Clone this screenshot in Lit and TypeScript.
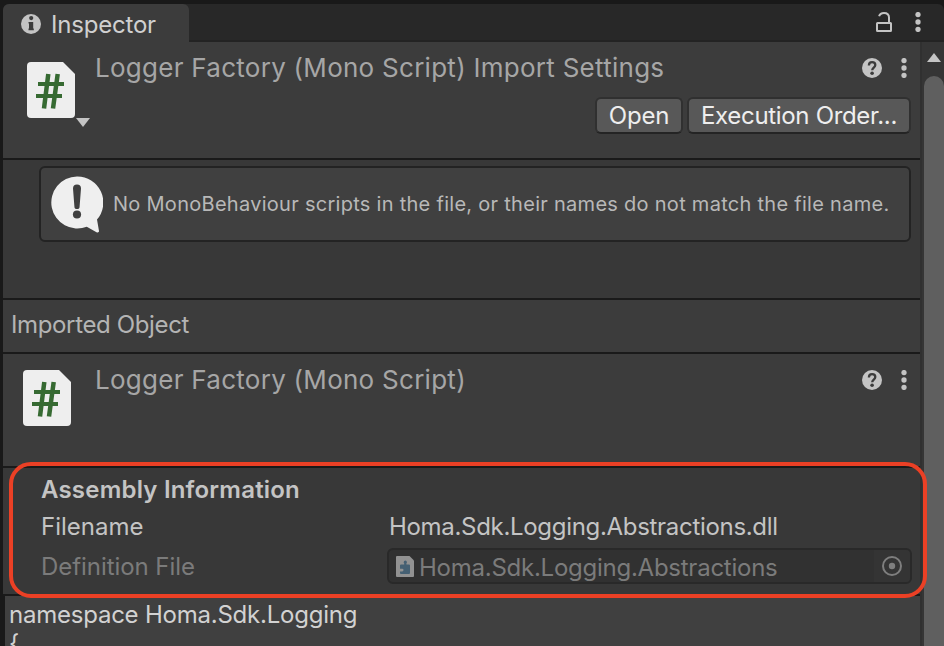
import { LitElement, html, css, svg } from "lit";
import { customElement, property } from "lit/decorators.js";

@customElement("script-icon")
class ScriptIcon extends LitElement {
  static styles = css`
    :host { display: block; width: 48px; height: 56px; }
    svg { display: block; }
  `;
  render() {
    return html`<svg width="48" height="56" viewBox="0 0 48 56">
      <path d="M4 0H36L48 12V52a4 4 0 0 1-4 4H4a4 4 0 0 1-4-4V4a4 4 0 0 1 4-4Z" fill="#eeeeee" />
      <path d="M21.3 12 17 46.5M30.7 12 26 46.5" fill="none" stroke="#366a32" stroke-width="4.5" />
      <path d="M11 22H37M9 34H35" fill="none" stroke="#366a32" stroke-width="4.2" />
    </svg>`;
  }
}

@customElement("kebab-icon")
class KebabIcon extends LitElement {
  static styles = css`
    :host { display: block; width: 6px; height: 20px; }
    svg { display: block; }
  `;
  render() {
    return html`<svg width="6" height="20" viewBox="0 0 6 20" fill="#c4c4c4">
      ${[2.6, 10, 17.4].map((y) => svg`<circle cx="3" cy=${y} r="2.65" />`)}
    </svg>`;
  }
}

@customElement("help-icon")
class HelpIcon extends LitElement {
  static styles = css`
    :host { display: block; width: 20px; height: 20px; }
    svg { display: block; }
  `;
  render() {
    return html`<svg width="20" height="20" viewBox="0 0 20 20">
      <circle cx="10" cy="10" r="10" fill="#c4c4c4" />
      <path d="M6.9 7.4C6.9 5.3 8.2 4.1 10.1 4.1S13.3 5.3 13.3 7c0 2.6-3.1 2.6-3.1 5.3" fill="none" stroke="#3c3c3c" stroke-width="2.3" />
      <circle cx="10.1" cy="15.2" r="1.8" fill="#3c3c3c" />
    </svg>`;
  }
}

@customElement("asset-header")
class AssetHeader extends LitElement {
  @property() heading = "";
  @property({ type: Boolean }) importer = false;

  static styles = css`
    :host { display: block; box-sizing: border-box; height: 112px; background: #3c3c3c; }
    :host([importer]) { height: 116px; }
    .row { display: flex; align-items: flex-start; }
    .icon { width: 92px; flex: none; padding: 16px 0 0 20px; box-sizing: border-box; }
    :host([importer]) .icon { padding: 20px 0 0 24px; }
    .arrow { display: block; margin-left: 48px; }
    .main { flex: 1; padding: 10px 9px 0 0; }
    .top { display: flex; align-items: center; height: 32px; }
    .title { flex: 1; font-size: 26px; line-height: 32px; letter-spacing: 0.27px; color: #a6a6a6; white-space: nowrap; }
    help-icon { margin-right: 19px; }
    kebab-icon { margin-right: 4px; }
    .buttons { display: flex; justify-content: flex-end; gap: 4px; margin-top: 13px; }
    .btn { box-sizing: border-box; height: 37px; border: 2px solid #303030; border-bottom-color: #242424; border-radius: 6px; background: #585858; color: #eeeeee; font: 24px/33px Inter, sans-serif; padding: 0; text-align: center; white-space: nowrap; }
    .open { width: 88px; letter-spacing: -0.15px; }
    .order { width: 224px; letter-spacing: -0.32px; }
  `;

  render() {
    return html`<div class="row">
      <div class="icon">
        <script-icon></script-icon>
        ${this.importer
          ? html`<svg class="arrow" width="16" height="9" viewBox="0 0 16 9"><path d="M1 0H15L8 9Z" fill="#c4c4c4" /></svg>`
          : null}
      </div>
      <div class="main">
        <div class="top">
          <div class="title">${this.heading}</div>
          <help-icon></help-icon>
          <kebab-icon></kebab-icon>
        </div>
        ${this.importer
          ? html`<div class="buttons">
              <button class="btn open">Open</button>
              <button class="btn order">Execution Order...</button>
            </div>`
          : null}
      </div>
    </div>`;
  }
}

@customElement("app-root")
class AppRoot extends LitElement {
  static styles = css`
    :host { display: flex; flex-direction: column; position: relative; box-sizing: border-box; width: 944px; height: 646px; padding: 4px 0 0 3px; overflow: hidden; background: #191919; color: #c8c8c8; font: 24px/30px Inter, sans-serif; }
    svg { display: block; flex: none; }
    .tabs { display: flex; flex: none; height: 38px; box-sizing: border-box; background: #282828; box-shadow: inset 0 -2px #232323; border-radius: 6px 6px 0 0; }
    .tab { display: flex; align-items: center; gap: 10px; width: 186px; height: 38px; box-sizing: border-box; padding: 2px 0 0 18px; border-radius: 6px 6px 0 0; background: #3c3c3c; color: #d0d0d0; }
    .tab span { padding-top: 2px; letter-spacing: -0.2px; }
    .tools { display: flex; align-items: flex-start; margin-left: auto; padding: 8px 23px 0 0; }
    .tools kebab-icon { margin-left: 23px; }
    .body { display: flex; flex: 1; min-height: 0; }
    .content { display: flex; flex-direction: column; width: 917px; }
    .content > * { flex: none; }
    .rule { height: 2px; background: #1a1a1a; }
    .notice { height: 138px; box-sizing: border-box; padding: 6px 9px 0 36px; background: #383838; }
    .box { display: flex; align-items: flex-start; height: 76px; box-sizing: border-box; border: 2px solid #232323; border-radius: 6px; background: #404040; padding: 7.5px 0 0 10px; }
    .box p { margin: 16.5px 0 0 10px; font-size: 20px; line-height: 24px; letter-spacing: 0.28px; color: #b8b8b8; white-space: nowrap; }
    .imported { height: 52px; box-sizing: border-box; padding: 10px 0 0 8px; background: #3c3c3c; color: #b4b4b4; }
    .imported span { letter-spacing: -0.36px; }
    .assembly { height: 126px; box-sizing: border-box; padding: 7px 8px 0 38px; background: #383838; white-space: nowrap; }
    .assembly h2 { margin: 0; font-size: 24px; line-height: 30px; font-weight: 600; letter-spacing: 0.2px; color: #c4c4c4; }
    .field { display: grid; grid-template-columns: 348px 1fr; align-items: center; height: 30px; margin-top: 7px; color: #c4c4c4; }
    .field .value { letter-spacing: -0.31px; }
    .field.disabled { grid-template-columns: 346px 1fr; height: 36px; margin-top: 6px; color: #7b7b7b; }
    .disabled > span { padding-top: 2px; letter-spacing: -0.06px; }
    .object { display: flex; align-items: center; box-sizing: border-box; height: 36px; border: 2px solid #292929; border-radius: 6px; background: #313131; padding-left: 7px; overflow: hidden; }
    .object span { margin-left: 5px; padding-top: 4px; letter-spacing: -0.25px; }
    .picker { display: flex; align-items: center; margin-left: auto; padding-left: 8px; width: 28px; height: 32px; background: #343434; }
    .code { flex: 1 1 0; min-height: 0; overflow: hidden; margin-left: 2px; padding: 4px 0 0 4px; background: #404040; color: #d2d2d2; line-height: 29px; letter-spacing: -0.23px; white-space: pre; }
    .scroll { display: flex; flex-direction: column; width: 24px; background: #353535; box-shadow: inset 2px 0 #303030; }
    .up { margin: 11px 0 0 7px; }
    .thumb { flex: 1; margin: 14px 0 0 4px; border-radius: 10px 10px 0 0; background: #5f5f5f; }
    .highlight { position: absolute; left: 9px; top: 462px; width: 918px; height: 136px; box-sizing: border-box; border: 4px solid #eb4025; border-radius: 22px; }
  `;

  render() {
    return html`
      <div class="tabs">
        <div class="tab">
          <svg width="20" height="20" viewBox="0 0 20 20">
            <circle cx="10" cy="10" r="10" fill="#c4c4c4" />
            <circle cx="10.2" cy="4.1" r="2.1" fill="#3c3c3c" />
            <path d="M7.5 8H12.2V14.4H12.8V16.2H7.5V14.4H8V9.6H7.5Z" fill="#3c3c3c" />
          </svg>
          <span>Inspector</span>
        </div>
        <div class="tools">
          <svg width="16" height="20" viewBox="0 0 16 20" fill="none" stroke="#c4c4c4" stroke-width="2">
            <rect x="1" y="11" width="14" height="8" rx="0.5" />
            <path d="M3.1 4.3C3.7 2.2 5.5 1 8 1c3.2 0 5 1.7 5 4.6V11" />
          </svg>
          <kebab-icon></kebab-icon>
        </div>
      </div>
      <div class="body">
        <div class="content">
          <asset-header importer heading="Logger Factory (Mono Script) Import Settings"></asset-header>
          <div class="rule"></div>
          <div class="notice">
            <div class="box">
              <svg width="52" height="57" viewBox="0 0 52 57">
                <path d="M26 .5a26 26 0 1 0 9.8 50.2L45.5 56.2c1.3.7 2.6.2 2.5-1.3L46 43.5A26 26 0 0 0 26 .5Z" fill="#efefef" />
                <path d="M22 12.5a4 4 0 0 1 8 0L28.6 30.5a2.6 2.6 0 0 1-5.2 0Z" fill="#404040" />
                <circle cx="26" cy="38.5" r="4.1" fill="#404040" />
              </svg>
              <p>No MonoBehaviour scripts in the file, or their names do not match the file name.</p>
            </div>
          </div>
          <div class="rule"></div>
          <div class="imported"><span>Imported Object</span></div>
          <div class="rule"></div>
          <asset-header heading="Logger Factory (Mono Script)"></asset-header>
          <div class="rule"></div>
          <div class="assembly">
            <h2>Assembly Information</h2>
            <div class="field"><span>Filename</span><span class="value">Homa.Sdk.Logging.Abstractions.dll</span></div>
            <div class="field disabled">
              <span>Definition File</span>
              <div class="object">
                <svg width="18" height="21" viewBox="0 0 18 21">
                  <path d="M1 0H13.5L18 4.5V20a1 1 0 0 1-1 1H1a1 1 0 0 1-1-1V1a1 1 0 0 1 1-1Z" fill="#929292" />
                  <path d="M5 8.5H8.2V7.4a1.6 1.6 0 1 1 2.2 0V8.5H13a1 1 0 0 1 1 1V17a1 1 0 0 1-1 1H5a1 1 0 0 1-1-1V15.4H6.2a1.3 1.3 0 1 0 0-2.6H4V9.5a1 1 0 0 1 1-1Z" fill="#456073" />
                </svg>
                <span>Homa.Sdk.Logging.Abstractions</span>
                <div class="picker">
                  <svg width="20" height="20" viewBox="0 0 20 20">
                    <circle cx="10" cy="10" r="9" fill="none" stroke="#7e7e7e" stroke-width="2" />
                    <circle cx="10" cy="10" r="3.2" fill="#7e7e7e" />
                  </svg>
                </div>
              </div>
            </div>
          </div>
          <div class="rule"></div>
          <div class="code">namespace Homa.Sdk.Logging
{</div>
        </div>
        <div class="scroll">
          <svg class="up" width="14" height="9" viewBox="0 0 14 9"><path d="M0 9H14L7 0Z" fill="#c4c4c4" /></svg>
          <div class="thumb"></div>
        </div>
      </div>
      <div class="highlight"></div>
    `;
  }
}
